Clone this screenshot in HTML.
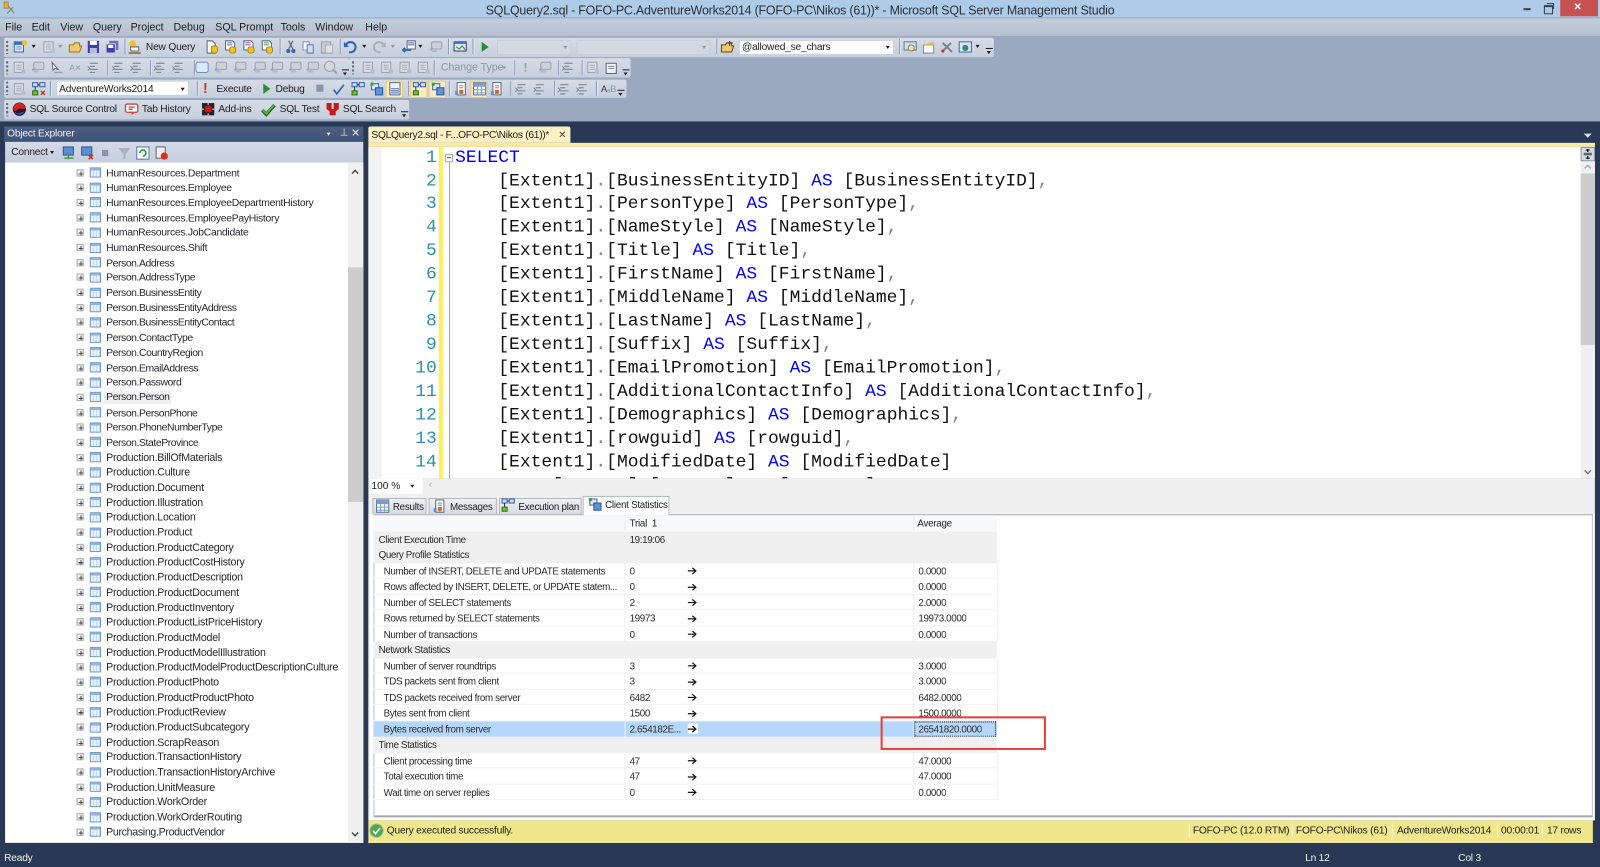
<!DOCTYPE html>
<html><head><meta charset="utf-8"><title>SSMS</title>
<style>
html,body{margin:0;padding:0;background:#293955;overflow:hidden;width:1600px;height:867px}
#root{position:absolute;left:0;top:0;width:1568px;height:850px;transform:scale(1.02041);transform-origin:0 0;overflow:hidden;background:#293955;font-family:"Liberation Sans",sans-serif;font-size:10px;color:#1e1e1e}
.a{position:absolute}
.t{position:absolute;white-space:nowrap;line-height:14px;font-size:10px;letter-spacing:-.2px}
svg.i{position:absolute;width:14px;height:14px;overflow:visible}
.bar{position:absolute;background:linear-gradient(#d6dce7,#c6cfdd);border-radius:2px}
.sep{position:absolute;width:1px;height:15px;background:#8e9bb2;border-right:1px solid #e4e8ef}
.grip{position:absolute;width:2px;height:13px;background:repeating-linear-gradient(#5a6a85 0 2px,transparent 2px 4px)}
.chev{position:absolute;width:7px;height:5px;border-top:1px solid #222}
.chev:after{content:"";position:absolute;left:1px;top:2px;border:2.5px solid transparent;border-top:3px solid #222;border-bottom:0}
.dd{position:absolute;border:2.5px solid transparent;border-top:3px solid #222;border-bottom:0}
.dg{border-top-color:#8a94a6}
.hl{position:absolute;width:17px;height:17px;background:#fdeec4;border:1px solid #e8c878;box-sizing:border-box}
.mn{position:absolute;top:21px;line-height:14px;font-size:10.4px}
#tree{position:absolute;left:5px;top:161.6px;width:336px}
#tree div{position:relative;height:14.7px;line-height:17.7px;padding-left:99px;white-space:nowrap;font-size:10.4px;letter-spacing:-.22px;color:#26282c}
#tree div.h{font-size:10.2px;letter-spacing:-.285px}
#tree div.p{font-size:10.2px;letter-spacing:-.41px}
#tree div:before{content:"";position:absolute;left:69.5px;top:4px;border:1px solid #a8a8a8;background:linear-gradient(90deg,transparent 2px,#444 2px,#444 3px,transparent 3px) 1px 1px/5px 5px no-repeat,linear-gradient(transparent 2px,#444 2px,#444 3px,transparent 3px) 1px 1px/5px 5px no-repeat,#f4f4f4;box-sizing:content-box;width:5px;height:5px}
#tree div:after{content:"";position:absolute;left:83px;top:2.5px;width:9px;height:8px;border:1px solid #6f9bcc;background:linear-gradient(#8eb5e0 0 2px,transparent 2px),repeating-linear-gradient(90deg,#e8f1fa 0 2px,#c8dbef 2px 3px)}
#code{position:absolute;margin:0;font-family:"Liberation Mono",monospace;font-size:17.6px;letter-spacing:.015px;line-height:22.92px;color:#111;white-space:pre}
#nums{position:absolute;width:33px;text-align:right;font-family:"Liberation Mono",monospace;font-size:17.6px;line-height:22.92px;color:#2b91af}
.b{color:#0000ff}.g{color:#808080}
#grid{position:absolute;left:366px;top:520.6px;width:611px}
.r{position:relative;height:15.53px;line-height:17px;border-bottom:1px solid #f2f2f2;box-sizing:border-box;white-space:nowrap;font-size:9.6px;letter-spacing:-.35px;color:#2a2a2a}
.r.h{background:#f0f0f0;border-bottom-color:#f0f0f0}
.r span{position:absolute;top:0;overflow:hidden}
.r .l{left:10px;width:235px}.r.h .l{left:5px}
.r .v{left:251px}.r .w{left:534px}
.r svg{position:absolute;left:308px;top:4.5px;width:9px;height:7px}
.r i{position:absolute;left:245.5px;top:0;width:1px;height:15px;background:#ececec}
.r u{position:absolute;left:528.5px;top:0;width:1px;height:15px;background:#ececec}
.r b{position:absolute;left:610.5px;top:0;width:1px;height:15px;background:#f2f2f2}
.tab{position:absolute;top:488px;height:16px;background:linear-gradient(#eef0f4,#d6dae2);border:1px solid #b4b8c0;border-bottom:0;box-sizing:border-box}
.tt{font-size:9.6px;letter-spacing:-.25px}
</style></head><body>
<svg width="0" height="0" style="position:absolute">
<defs>
<symbol id="doc" viewBox="0 0 14 14"><path d="M3 1h5l3 3v9H3z" fill="#fff" stroke="#5d6a80"/><rect x="7" y="6" width="6" height="7" rx="2" fill="#f4c21e" stroke="#8a6a10" stroke-width=".7"/></symbol>
<symbol id="doc2" viewBox="0 0 14 14"><path d="M3 1h7l2 2v7H3z" fill="#fff" stroke="#5d6a80"/><path d="M4.500 3h5M4.500 5h5" stroke="#4a7ac0"/><rect x="7" y="7" width="6" height="6" rx="2" fill="#f4c21e" stroke="#8a6a10" stroke-width=".7"/></symbol>
<symbol id="doc3" viewBox="0 0 14 14"><path d="M3 1h7l2 2v7H3z" fill="#fff" stroke="#5d6a80"/><path d="M4.500 3h5M4.500 5h5" stroke="#b040b0"/><rect x="7" y="7" width="6" height="6" rx="2" fill="#f4c21e" stroke="#8a6a10" stroke-width=".7"/></symbol>
<symbol id="doc4" viewBox="0 0 14 14"><path d="M3 1h7l2 2v7H3z" fill="#fff" stroke="#5d6a80"/><path d="M4.500 3h5M4.500 5h5" stroke="#40a040"/><rect x="7" y="7" width="6" height="6" rx="2" fill="#f4c21e" stroke="#8a6a10" stroke-width=".7"/></symbol>
<symbol id="gd" viewBox="0 0 14 14"><rect x="2" y="2" width="9" height="10" fill="#d9dde4" stroke="#99a1ae"/><path d="M4 5h5M4 7h5M4 9h5" stroke="#aab1bd"/><path d="M9 9h4v4H9z" fill="#b8bec9"/></symbol>
<symbol id="gl" viewBox="0 0 14 14"><path d="M3 3h8M3 6h5M3 9h8M3 12h5" stroke="#7f8999" stroke-width="1.200"/><path d="M1 6l2 2-2 2" fill="none" stroke="#7f8999"/></symbol>
<symbol id="gb" viewBox="0 0 14 14"><rect x="3" y="2" width="10" height="7" rx="1.500" fill="#ccd1da" stroke="#99a1ae"/><path d="M1 9l3-2v5z" fill="#99a1ae"/><rect x="3" y="9" width="5" height="3" fill="#b5bbc6"/></symbol>
<symbol id="tb" viewBox="0 0 14 14"><path d="M1 2h9v10H1z" fill="#dde6f4" stroke="#3a6ab0"/><path d="M1 2h9v3H1z" fill="#3a70c0"/><path d="M3 7h5M3 9h5" stroke="#7e99c2"/><circle cx="11" cy="3" r="2.500" fill="#f4c21e"/></symbol>
<symbol id="stats" viewBox="0 0 14 14"><rect x="2" y="2" width="7" height="6" fill="#dbe8f8" stroke="#3a6ab0"/><rect x="6" y="6" width="7" height="7" fill="#5d93d8" stroke="#2a5a9a"/><path d="M1 1h3v3H1z" fill="#3aa03a"/></symbol>
<symbol id="plan" viewBox="0 0 14 14"><rect x="1" y="1" width="5" height="4" fill="#cde" stroke="#3060b0"/><rect x="8" y="1" width="5" height="4" fill="#cde" stroke="#3060b0"/><path d="M3.500 5v4M6 3h2" stroke="#333"/><rect x="1" y="9" width="5" height="4" fill="#6cc040" stroke="#307010"/></symbol>
<symbol id="tdoc" viewBox="0 0 14 14"><path d="M3 1h8v12H3z" fill="#fff" stroke="#5d6a80"/><path d="M5 4h4M5 6h4" stroke="#888"/><path d="M5 8h4v4H5z" fill="#d06a30"/><path d="M1 9h3v4H1z" fill="#5d93d8"/></symbol>
<symbol id="grd" viewBox="0 0 14 14"><rect x="1" y="1" width="12" height="12" fill="#fff" stroke="#506e9a"/><path d="M1 4.500h12M1 8h12M1 11h12M5 1v12M9 1v12" stroke="#7f9ac2"/><path d="M1 1h12v3H1z" fill="#7f9ac2"/></symbol>
<symbol id="arr" viewBox="0 0 9 7"><path d="M0 3.500h7" stroke="#111" stroke-width="1.200"/><path d="M4.500 .5l3.500 3-3.500 3" fill="none" stroke="#111" stroke-width="1.200"/></symbol>
</defs>
</svg>
<div id="root">
<!-- title bar -->
<div class="a" style="left:0;top:0;width:1568px;height:17.5px;background:#aecbe8;border-bottom:1px solid #8fabc9;box-sizing:border-box"></div>
<svg class="i" style="left:2px;top:1px"><path d="M2 1h4v6H2z" fill="#f0b020" stroke="#a06a10" stroke-width=".6"/><path d="M6 5l6 7M11 6l-6 6" stroke="#8a8a60" stroke-width="1.200"/></svg>
<div class="t" style="left:476px;top:2.500px;font-size:12.2px;letter-spacing:-.215px;color:#2a2f38">SQLQuery2.sql - FOFO-PC.AdventureWorks2014 (FOFO-PC\Nikos (61))* - Microsoft SQL Server Management Studio</div>
<div class="a" style="left:1493px;top:8px;width:7px;height:2px;background:#33404f"></div>
<div class="a" style="left:1513px;top:5px;width:7px;height:6px;border:1px solid #33404f;border-top-width:2px"></div>
<div class="a" style="left:1516px;top:3px;width:6px;height:5px;border:1px solid #33404f;border-left:0;border-bottom:0"></div>
<div class="a" style="left:1529px;top:0;width:37px;height:15.500px;background:#c75050"></div>
<div class="t" style="left:1542px;top:1px;color:#fff;font-weight:bold;font-size:10px">✕</div>
<!-- menu -->
<div class="a" style="left:0;top:17.500px;width:1568px;height:18.500px;background:linear-gradient(#c5cdda,#b5bfd0)"></div>
<div class="mn" style="left:5px">File</div><div class="mn" style="left:31px">Edit</div><div class="mn" style="left:59px">View</div><div class="mn" style="left:91px">Query</div><div class="mn" style="left:128px">Project</div><div class="mn" style="left:170px">Debug</div><div class="mn" style="left:211px">SQL Prompt</div><div class="mn" style="left:275px">Tools</div><div class="mn" style="left:309px">Window</div><div class="mn" style="left:358px">Help</div>
<!-- toolbar bg -->
<div class="a" style="left:0;top:36px;width:1568px;height:83px;background:#9aa8c0"></div>
<div class="bar" style="left:4px;top:36.500px;width:970px;height:19.500px"></div>
<div class="bar" style="left:4px;top:57px;width:338px;height:19px"></div>
<div class="bar" style="left:342px;top:57px;width:276px;height:19px"></div>
<div class="bar" style="left:4px;top:77.500px;width:610px;height:18.500px"></div>
<div class="bar" style="left:4px;top:97.500px;width:397px;height:19px"></div>
<!-- row 1 -->
<div class="grip" style="left:6px;top:40px"></div>
<svg class="i" style="left:13px;top:39px"><use href="#tb"/></svg><div class="dd" style="left:31px;top:44px"></div>
<svg class="i" style="left:41px;top:39px"><use href="#gd"/></svg><div class="dd dg" style="left:57px;top:44px"></div>
<svg class="i" style="left:67px;top:39px"><path d="M1 5h4l1-2h5v3h2l-2 6H1z" fill="#f2c86a" stroke="#9a7420"/></svg>
<svg class="i" style="left:85px;top:39px"><path d="M1 1h11v12H1z" fill="#3a3fa8"/><rect x="3" y="1" width="7" height="4" fill="#fff"/><rect x="3" y="8" width="7" height="5" fill="#b8bce0"/></svg>
<svg class="i" style="left:103px;top:39px"><path d="M4 1h9v9H4z" fill="#6a6fc0"/><path d="M1 4h9v9H1z" fill="#3a3fa8" stroke="#ccd"/><rect x="3" y="5" width="5" height="3" fill="#fff"/></svg>
<div class="sep" style="left:122px;top:38px"></div>
<svg class="i" style="left:125px;top:39px"><circle cx="5" cy="4" r="3.500" fill="#f4c21e"/><path d="M3 7h8v4H3z" fill="#fff" stroke="#667"/><path d="M1 13h12" stroke="#8a6a20" stroke-width="1.500"/></svg>
<div class="t" style="left:143px;top:39.800px">New Query</div>
<svg class="i" style="left:200px;top:39px"><use href="#doc"/></svg>
<svg class="i" style="left:218px;top:39px"><use href="#doc2"/></svg>
<svg class="i" style="left:236px;top:39px"><use href="#doc3"/></svg>
<svg class="i" style="left:254px;top:39px"><use href="#doc4"/></svg>
<div class="sep" style="left:274px;top:38px"></div>
<svg class="i" style="left:278px;top:39px"><path d="M5 1l4 8M9 1L5 9" stroke="#667" stroke-width="1.200"/><circle cx="4.500" cy="11" r="2" fill="#3a60b0"/><circle cx="9.500" cy="11" r="2" fill="#3a60b0"/></svg>
<svg class="i" style="left:295px;top:39px"><path d="M2 2h6v8H2z" fill="#fff" stroke="#7a90b8"/><path d="M6 5h6v8H6z" fill="#cfe0f6" stroke="#5a7ab0"/></svg>
<svg class="i" style="left:313px;top:39px"><path d="M2 2h9v11H2z" fill="#c8ccd4" stroke="#99a1ae"/><path d="M6 5h7v8H6z" fill="#dde0e6" stroke="#aab"/></svg>
<div class="sep" style="left:333px;top:38px"></div>
<svg class="i" style="left:336px;top:39px"><path d="M3 5a5 5 0 1 1 3 7" fill="none" stroke="#2a60c0" stroke-width="2"/><path d="M1 2v5h5z" fill="#2a60c0"/></svg><div class="dd" style="left:355px;top:44px"></div>
<svg class="i" style="left:365px;top:39px"><path d="M11 5a5 5 0 1 0-3 7" fill="none" stroke="#a8b0bd" stroke-width="2"/><path d="M13 2v5H8z" fill="#a8b0bd"/></svg><div class="dd dg" style="left:383px;top:44px"></div>
<svg class="i" style="left:394px;top:39px"><rect x="5" y="1" width="8" height="8" fill="#fff" stroke="#667"/><path d="M6 3h6M6 5h6" stroke="#3a60b0"/><path d="M1 10h8M3 8l-2 2 2 2" stroke="#2a60c0" stroke-width="1.800" fill="none"/></svg><div class="dd" style="left:410px;top:44px"></div>
<svg class="i" style="left:420px;top:39px"><use href="#gb"/></svg>
<div class="sep" style="left:439px;top:38px"></div>
<svg class="i" style="left:444px;top:39px"><rect x="1" y="2" width="12" height="9" fill="#dde6f4" stroke="#3a4a60"/><path d="M1 2h12v2H1z" fill="#3a70c0"/><path d="M3 7l3 2 3-3 3 4" stroke="#40a040" fill="none" stroke-width="1.200"/></svg>
<div class="sep" style="left:463px;top:38px"></div>
<svg class="i" style="left:468px;top:39px"><path d="M4 2l7 5-7 5z" fill="#2e8b2e"/></svg>
<div class="a" style="left:487px;top:38.500px;width:73px;height:15px;background:#d3d9e3;border:1px solid #c6cdd9;box-sizing:border-box"></div><div class="dd dg" style="left:552px;top:45px"></div>
<div class="a" style="left:565px;top:38.500px;width:131px;height:15px;background:#d3d9e3;border:1px solid #c6cdd9;box-sizing:border-box"></div><div class="dd dg" style="left:688px;top:45px"></div>
<div class="sep" style="left:702px;top:38px"></div>
<svg class="i" style="left:706px;top:39px"><path d="M1 5h4l1-2h5v3h2l-2 6H1z" fill="#f2c86a" stroke="#5a4a20"/><path d="M9 1v5M7 3h5" stroke="#333"/></svg>
<div class="a" style="left:724px;top:38.500px;width:152px;height:15px;background:#fff;border:1px solid #c6cdd9;box-sizing:border-box"></div>
<div class="t" style="left:727px;top:39.500px">@allowed_se_chars</div><div class="dd" style="left:868px;top:45px"></div>
<div class="sep" style="left:881px;top:38px"></div>
<svg class="i" style="left:885px;top:39px"><rect x="1" y="2" width="12" height="8" fill="#cfe0f6" stroke="#5a7ab0"/><circle cx="8" cy="8" r="3" fill="#f4e8b0" stroke="#a08030"/></svg>
<svg class="i" style="left:903px;top:39px"><path d="M2 5h10v8H2z" fill="#fff" stroke="#8a8a8a"/><path d="M2 5l10-3v3z" fill="#e8b840"/></svg>
<svg class="i" style="left:921px;top:39px"><path d="M2 12L11 3M3 3l9 9" stroke="#7a8494" stroke-width="2"/><circle cx="3" cy="11" r="1.500" fill="#c03030"/></svg>
<svg class="i" style="left:939px;top:39px"><rect x="1" y="2" width="12" height="10" fill="#dde6f4" stroke="#3a6ab0"/><circle cx="7" cy="8" r="3" fill="#2e8b6e"/></svg><div class="dd" style="left:956px;top:44px"></div>
<div class="chev" style="left:966px;top:47px"></div>
<!-- row 2 -->
<div class="grip" style="left:6px;top:60px"></div>
<svg class="i" style="left:12px;top:59px"><use href="#gd"/></svg><svg class="i" style="left:30px;top:59px"><use href="#gb"/></svg><svg class="i" style="left:48px;top:59px"><path d="M3 2l1 8 2-2 3 1z" fill="#fff" stroke="#667"/><path d="M5 12h8" stroke="#99a1ae" stroke-width="1.500"/></svg><div class="t" style="left:68px;top:60px;font-size:8px;color:#8e96a4">A✕</div><svg class="i" style="left:85px;top:59px"><use href="#gl"/></svg>
<div class="sep" style="left:105px;top:59px"></div>
<svg class="i" style="left:109px;top:59px"><use href="#gl"/></svg><svg class="i" style="left:127px;top:59px"><use href="#gl"/></svg>
<div class="sep" style="left:147px;top:59px"></div>
<svg class="i" style="left:150px;top:59px"><use href="#gl"/></svg><svg class="i" style="left:168px;top:59px"><use href="#gl"/></svg>
<div class="sep" style="left:190px;top:59px"></div>
<svg class="i" style="left:191px;top:59px"><rect x="1" y="2" width="12" height="10" rx="2" fill="#dbe8f8" stroke="#6f8fc0"/></svg>
<svg class="i" style="left:209px;top:59px"><use href="#gb"/></svg><svg class="i" style="left:228px;top:59px"><use href="#gb"/></svg><svg class="i" style="left:247px;top:59px"><use href="#gb"/></svg><svg class="i" style="left:264px;top:59px"><use href="#gb"/></svg><svg class="i" style="left:282px;top:59px"><use href="#gb"/></svg><svg class="i" style="left:299px;top:59px"><use href="#gb"/></svg><svg class="i" style="left:317px;top:59px"><circle cx="6" cy="6" r="5" fill="#d5d9e0" stroke="#99a1ae"/><path d="M9 9l4 4" stroke="#99a1ae" stroke-width="2"/></svg>
<div class="chev" style="left:335px;top:68px"></div>
<div class="grip" style="left:345px;top:60px"></div>
<svg class="i" style="left:354px;top:59px"><use href="#gd"/></svg><svg class="i" style="left:372px;top:59px"><use href="#gd"/></svg><svg class="i" style="left:390px;top:59px"><use href="#gd"/></svg><svg class="i" style="left:408px;top:59px"><use href="#gd"/></svg>
<div class="sep" style="left:425px;top:59px"></div>
<div class="t" style="left:432px;top:59.500px;font-size:10.400px;letter-spacing:-.02px;color:#8c95a5">Change Type</div><div class="dd dg" style="left:492px;top:65px"></div>
<div class="sep" style="left:504px;top:59px"></div>
<div class="t" style="left:513px;top:59px;font-size:12px;font-weight:bold;color:#9aa2b0">!</div>
<svg class="i" style="left:527px;top:59px"><use href="#gb"/></svg>
<div class="sep" style="left:547px;top:59px"></div>
<svg class="i" style="left:550px;top:59px"><use href="#gl"/></svg>
<div class="sep" style="left:570px;top:59px"></div>
<svg class="i" style="left:574px;top:59px"><use href="#gd"/></svg><svg class="i" style="left:592px;top:59px"><rect x="2" y="3" width="10" height="10" fill="#eef0f4" stroke="#667"/><path d="M4 6h6M4 8h6" stroke="#888"/></svg>
<div class="chev" style="left:610px;top:68px"></div>
<!-- row 3 -->
<div class="grip" style="left:6px;top:80px"></div>
<svg class="i" style="left:12px;top:80px"><use href="#gd"/></svg>
<svg class="i" style="left:31px;top:80px"><use href="#plan"/><path d="M9 9l4 4M13 9l-4 4" stroke="#d03020" stroke-width="1.300"/></svg>
<div class="sep" style="left:49px;top:79px"></div>
<div class="a" style="left:55px;top:79px;width:130px;height:15px;background:#fff;border:1px solid #c6cdd9;box-sizing:border-box"></div>
<div class="t" style="left:58px;top:81px">AdventureWorks2014</div><div class="dd" style="left:177px;top:86px"></div>
<div class="sep" style="left:193px;top:79px"></div>
<div class="t" style="left:199px;top:79px;font-size:14px;font-weight:bold;color:#d83020">!</div>
<div class="t" style="left:212px;top:81px">Execute</div>
<svg class="i" style="left:254px;top:80px"><path d="M4 2l7 5-7 5z" fill="#2e8b2e"/></svg>
<div class="t" style="left:270px;top:81px">Debug</div>
<div class="a" style="left:310px;top:83px;width:7px;height:7px;background:#8a94a6"></div>
<svg class="i" style="left:325px;top:80px"><path d="M2 8l3 4 7-9" fill="none" stroke="#2a60c0" stroke-width="1.600"/></svg>
<svg class="i" style="left:344px;top:80px"><use href="#plan"/></svg>
<svg class="i" style="left:362px;top:80px"><use href="#stats"/></svg>
<div class="hl" style="left:378px;top:78.500px"></div>
<svg class="i" style="left:379.500px;top:80px"><rect x="2" y="1" width="10" height="12" fill="#eef2f8" stroke="#506e9a"/><path d="M3 7h8M3 9h8M3 11h8" stroke="#506e9a"/></svg>
<div class="sep" style="left:400px;top:79px"></div>
<div class="hl" style="left:402px;top:78.500px"></div><div class="hl" style="left:420px;top:78.500px"></div>
<svg class="i" style="left:403.500px;top:80px"><use href="#plan"/></svg><svg class="i" style="left:421.500px;top:80px"><use href="#stats"/></svg>
<div class="sep" style="left:440px;top:79px"></div>
<svg class="i" style="left:445px;top:80px"><use href="#tdoc"/></svg>
<div class="hl" style="left:461px;top:78.500px"></div><svg class="i" style="left:462.500px;top:80px"><use href="#grd"/></svg>
<svg class="i" style="left:480px;top:80px"><use href="#tdoc"/></svg>
<div class="sep" style="left:500px;top:79px"></div>
<svg class="i" style="left:504px;top:80px"><use href="#gl"/></svg><svg class="i" style="left:522px;top:80px"><use href="#gl"/></svg>
<div class="sep" style="left:543px;top:79px"></div>
<svg class="i" style="left:546px;top:80px"><use href="#gl"/></svg><svg class="i" style="left:564px;top:80px"><use href="#gl"/></svg>
<div class="sep" style="left:584px;top:79px"></div>
<div class="t" style="left:589px;top:80px;font-size:9px;color:#334">A<span style="color:#8c95a5">ₐB</span></div>
<div class="chev" style="left:605px;top:88px"></div>
<!-- row 4 -->
<div class="grip" style="left:6px;top:100.500px"></div>
<svg class="i" style="left:12px;top:100px"><circle cx="7" cy="7" r="6.500" fill="#1a1a2a"/><path d="M1 8a6 6 0 0 1 12-2c-3 2-5-1-7 1s-3 2-5 1z" fill="#d82020"/><path d="M2 10c3 3 8 3 10-1-3 1-6 3-10 1z" fill="#2a60d0"/></svg>
<div class="t" style="left:29px;top:100.500px">SQL Source Control</div>
<svg class="i" style="left:122px;top:100px"><rect x="1" y="2" width="12" height="8" rx="1.500" fill="#fff" stroke="#d04040" stroke-width="1.300"/><path d="M4 5h6M4 7h4" stroke="#a02020"/><path d="M7 10v3l3-3z" fill="#d04040"/></svg>
<div class="t" style="left:139px;top:100.500px">Tab History</div>
<svg class="i" style="left:197px;top:100px"><rect x="1" y="1" width="12" height="12" fill="#222"/><rect x="4" y="4" width="6" height="6" fill="#d01818"/><path d="M7 1v2M7 11v2M1 7h2M11 7h2" stroke="#ddd"/></svg>
<div class="t" style="left:214px;top:100.500px">Add-ins</div>
<svg class="i" style="left:256px;top:100px"><path d="M1 8l4 4 8-9" fill="none" stroke="#1e5a1e" stroke-width="3.400"/><path d="M1.500 8l3.500 3.500 7.500-8.500" fill="none" stroke="#4fb83f" stroke-width="1.800"/></svg>
<div class="t" style="left:274px;top:100.500px">SQL Test</div>
<svg class="i" style="left:319px;top:100px"><path d="M1 1h5v6h2V1h5v6l-3 2v4H4V9L1 7z" fill="#c81818"/></svg>
<div class="t" style="left:336px;top:100.500px">SQL Search</div>
<div class="chev" style="left:393px;top:109px"></div>
<!-- Object Explorer -->
<div class="a" style="left:4px;top:124px;width:352px;height:15px;background:linear-gradient(#4d6082,#3d5277)"></div>
<div class="t" style="left:7px;top:125px;color:#f0f2f6">Object Explorer</div>
<div class="dd" style="left:320px;top:130px;border-top-color:#e6eaf0"></div>
<div class="t" style="left:333px;top:124px;color:#e6eaf0;font-size:10px">⊥</div>
<div class="t" style="left:344px;top:124px;color:#e6eaf0;font-size:11px">✕</div>
<div class="a" style="left:5px;top:139px;width:351px;height:20px;background:linear-gradient(#d4dae6,#c6cfdf)"></div>
<div class="t" style="left:11px;top:143px">Connect</div><div class="dd" style="left:49px;top:148px"></div>
<svg class="i" style="left:61px;top:143px"><rect x="1" y="1" width="10" height="8" fill="#5d8ed0" stroke="#2a5a9a"/><path d="M6 9v4M2 12h9" stroke="#3aa03a" stroke-width="1.500"/></svg>
<svg class="i" style="left:79px;top:143px"><rect x="1" y="1" width="10" height="8" fill="#5d8ed0" stroke="#2a5a9a"/><path d="M8 9l4 4M12 9l-4 4" stroke="#d03020" stroke-width="1.500"/></svg>
<div class="a" style="left:100px;top:147px;width:6px;height:6px;background:#8a94a6"></div>
<svg class="i" style="left:115px;top:143px"><path d="M1 2h12L8 8v5H6V8z" fill="#aab2c0"/></svg>
<svg class="i" style="left:133px;top:143px"><rect x="1" y="1" width="12" height="12" fill="#f4f6fa" stroke="#5d7aa8"/><path d="M4 7a3 3 0 1 1 3 3" fill="none" stroke="#3aa03a" stroke-width="1.600"/></svg>
<svg class="i" style="left:151px;top:143px"><rect x="2" y="1" width="9" height="11" fill="#eee" stroke="#667"/><circle cx="10" cy="10" r="3.500" fill="#d83020"/></svg>
<div class="a" style="left:5px;top:159px;width:351px;height:667px;background:#fff;overflow:hidden">
</div>
<div id="tree">
<div class="h">HumanResources.Department</div><div class="h">HumanResources.Employee</div><div class="h">HumanResources.EmployeeDepartmentHistory</div><div class="h">HumanResources.EmployeePayHistory</div><div class="h">HumanResources.JobCandidate</div><div class="h">HumanResources.Shift</div><div class="p">Person.Address</div><div class="p">Person.AddressType</div><div class="p">Person.BusinessEntity</div><div class="p">Person.BusinessEntityAddress</div><div class="p">Person.BusinessEntityContact</div><div class="p">Person.ContactType</div><div class="p">Person.CountryRegion</div><div class="p">Person.EmailAddress</div><div class="p">Person.Password</div><div class="p"><span style="background:#f0f0f0;padding:0 2px 0 2px;margin-left:-2px;display:inline-block;line-height:13px;vertical-align:1px">Person.Person</span></div><div class="p">Person.PersonPhone</div><div class="p">Person.PhoneNumberType</div><div class="p">Person.StateProvince</div><div>Production.BillOfMaterials</div><div>Production.Culture</div><div>Production.Document</div><div>Production.Illustration</div><div>Production.Location</div><div>Production.Product</div><div>Production.ProductCategory</div><div>Production.ProductCostHistory</div><div>Production.ProductDescription</div><div>Production.ProductDocument</div><div>Production.ProductInventory</div><div>Production.ProductListPriceHistory</div><div>Production.ProductModel</div><div>Production.ProductModelIllustration</div><div>Production.ProductModelProductDescriptionCulture</div><div>Production.ProductPhoto</div><div>Production.ProductProductPhoto</div><div>Production.ProductReview</div><div>Production.ProductSubcategory</div><div>Production.ScrapReason</div><div>Production.TransactionHistory</div><div>Production.TransactionHistoryArchive</div><div>Production.UnitMeasure</div><div>Production.WorkOrder</div><div>Production.WorkOrderRouting</div><div style="letter-spacing:-.31px">Purchasing.ProductVendor</div>
</div>
<div class="a" style="left:341px;top:159px;width:15px;height:667px;background:#f0f0f0"></div>
<div class="a" style="left:341px;top:262px;width:15px;height:230px;background:#cdcdcd"></div>
<svg class="i" style="left:341px;top:162px"><path d="M4 8l3-3 3 3" fill="none" stroke="#444" stroke-width="1.400"/></svg>
<svg class="i" style="left:341px;top:810px"><path d="M4 6l3 3 3-3" fill="none" stroke="#444" stroke-width="1.400"/></svg>
<!-- Doc tab -->
<div class="a" style="left:361px;top:124px;width:198px;height:16px;background:#fdf0c4;border-radius:2px 2px 0 0"></div>
<div class="t" style="left:364px;top:126px;letter-spacing:-.28px">SQLQuery2.sql - F...OFO-PC\Nikos (61))*</div>
<div class="t" style="left:547px;top:126px;font-size:10px;color:#444">✕</div>
<div class="dd" style="left:1552px;top:131px;border:4px solid transparent;border-top:4px solid #dfe4ec;border-bottom:0"></div>
<div class="a" style="left:361px;top:140px;width:1202px;height:3.500px;background:#fde8a4"></div>
<!-- Editor -->
<div class="a" style="left:361px;top:143.500px;width:1202px;height:325.500px;background:#fff;overflow:hidden" id="ed"></div>
<div class="a" style="left:362px;top:143.500px;width:12px;height:325.500px;background:#f2f2f2"></div>
<div class="a" style="left:361px;top:143.500px;width:1202px;height:325.500px;overflow:hidden">
<div style="position:absolute;left:68.500px;top:0;width:4px;height:326px;background:#ffee62"></div>
<div style="position:absolute;left:78.500px;top:14px;width:1px;height:312px;background:#a5a5a5"></div>
<div style="position:absolute;left:75px;top:7px;width:6px;height:6px;border:1px solid #a5a5a5;background:linear-gradient(#555,#555) center/4px 1px no-repeat #fff"></div>
<div id="nums" style="left:34px;top:.1px">1<br>2<br>3<br>4<br>5<br>6<br>7<br>8<br>9<br>10<br>11<br>12<br>13<br>14</div>
<pre id="code" style="left:85px;top:.1px"><span class="b">SELECT</span>
    [Extent1]<span class="g">.</span>[BusinessEntityID] <span class="b">AS</span> [BusinessEntityID]<span class="g">,</span>
    [Extent1]<span class="g">.</span>[PersonType] <span class="b">AS</span> [PersonType]<span class="g">,</span>
    [Extent1]<span class="g">.</span>[NameStyle] <span class="b">AS</span> [NameStyle]<span class="g">,</span>
    [Extent1]<span class="g">.</span>[Title] <span class="b">AS</span> [Title]<span class="g">,</span>
    [Extent1]<span class="g">.</span>[FirstName] <span class="b">AS</span> [FirstName]<span class="g">,</span>
    [Extent1]<span class="g">.</span>[MiddleName] <span class="b">AS</span> [MiddleName]<span class="g">,</span>
    [Extent1]<span class="g">.</span>[LastName] <span class="b">AS</span> [LastName]<span class="g">,</span>
    [Extent1]<span class="g">.</span>[Suffix] <span class="b">AS</span> [Suffix]<span class="g">,</span>
    [Extent1]<span class="g">.</span>[EmailPromotion] <span class="b">AS</span> [EmailPromotion]<span class="g">,</span>
    [Extent1]<span class="g">.</span>[AdditionalContactInfo] <span class="b">AS</span> [AdditionalContactInfo]<span class="g">,</span>
    [Extent1]<span class="g">.</span>[Demographics] <span class="b">AS</span> [Demographics]<span class="g">,</span>
    [Extent1]<span class="g">.</span>[rowguid] <span class="b">AS</span> [rowguid]<span class="g">,</span>
    [Extent1]<span class="g">.</span>[ModifiedDate] <span class="b">AS</span> [ModifiedDate]
    <span class="b">FROM</span> [Person]<span class="g">.</span>[Person] <span class="b">AS</span> [Extent1]</pre>
</div>
<!-- editor scrollbar -->
<div class="a" style="left:1549px;top:143.500px;width:14px;height:325.500px;background:#f0f0f0"></div>
<div class="a" style="left:1549px;top:143.500px;width:14px;height:14px;background:#d4dbe6;border:1px solid #8a96ac;box-sizing:border-box"></div>
<svg class="i" style="left:1549px;top:143.500px"><path d="M7 2v3M7 9v3" stroke="#111" stroke-width="1.300"/><path d="M3 7h8" stroke="#666" stroke-width="2.500"/><path d="M5 3h4M5 11h4" stroke="#111"/></svg>
<svg class="i" style="left:1549px;top:157px"><path d="M4 8l3-3 3 3" fill="none" stroke="#a8a8a8" stroke-width="1.400"/></svg>
<div class="a" style="left:1549px;top:170px;width:14px;height:168px;background:#cdcdcd"></div>
<svg class="i" style="left:1549px;top:455px"><path d="M4 6l3 3 3-3" fill="none" stroke="#777" stroke-width="1.400"/></svg>
<!-- results -->
<div class="a" style="left:361px;top:469px;width:1202px;height:35.500px;background:#f0f0f0"></div>
<div class="a" style="left:362px;top:469px;width:52px;height:15px;background:#fff"></div>
<div class="t" style="left:364px;top:470px;letter-spacing:0">100 %</div><div class="dd" style="left:402px;top:475px"></div>
<div class="t" style="left:420px;top:468px;font-size:11px;color:#c0c0c0">‹</div>
<div class="tab" style="left:365px;width:53px"></div><div class="tab" style="left:420px;width:67px"></div><div class="tab" style="left:489px;width:81px"></div>
<div class="a" style="left:571px;top:486px;width:85px;height:19px;background:#fff;border:1px solid #b4b8c0;border-bottom:0;box-sizing:border-box;z-index:2"></div>
<svg class="i" style="left:368px;top:489px"><use href="#grd"/></svg><div class="t tt" style="left:385px;top:490.500px">Results</div>
<svg class="i" style="left:424px;top:489px"><use href="#tdoc"/></svg><div class="t tt" style="left:441px;top:490.500px">Messages</div>
<svg class="i" style="left:491px;top:488px"><use href="#plan"/></svg><div class="t tt" style="left:508px;top:490.500px">Execution plan</div>
<svg class="i" style="left:576px;top:487px;z-index:3"><use href="#stats"/></svg><div class="t tt" style="left:593px;top:489px;z-index:3">Client Statistics</div>
<div class="a" style="left:361px;top:504px;width:1202px;height:300px;background:#fff;border-left:1px solid #e0e0e0;box-sizing:border-box"></div>
<div class="a" style="left:365.500px;top:504px;width:1195px;height:297px;border:1px solid #c0c0c0;border-bottom:2px solid #a8a8a8;border-top-color:#a8a8a8;box-sizing:border-box"></div>
<div class="a" style="left:366px;top:505px;width:611px;height:15.500px;background:#f8f9fb"></div>
<div class="t tt" style="left:617px;top:507px">Trial&nbsp; 1</div><div class="t tt" style="left:899px;top:507px">Average</div>
<div class="a" style="left:611.500px;top:505px;width:1px;height:15px;background:#e9edf2"></div><div class="a" style="left:894.500px;top:505px;width:1px;height:15px;background:#e9edf2"></div>
<div id="grid">
<div class="r h"><span class="l">Client Execution Time</span><span class="v">19:19:06</span></div>
<div class="r h"><span class="l">Query Profile Statistics</span></div>
<div class="r"><i></i><u></u><b></b><span class="l">Number of INSERT, DELETE and UPDATE statements</span><span class="v">0</span><svg><use href="#arr"/></svg><span class="w">0.0000</span></div>
<div class="r"><i></i><u></u><b></b><span class="l">Rows affected by INSERT, DELETE, or UPDATE statem...</span><span class="v">0</span><svg><use href="#arr"/></svg><span class="w">0.0000</span></div>
<div class="r"><i></i><u></u><b></b><span class="l">Number of SELECT statements</span><span class="v">2</span><svg><use href="#arr"/></svg><span class="w">2.0000</span></div>
<div class="r"><i></i><u></u><b></b><span class="l">Rows returned by SELECT statements</span><span class="v">19973</span><svg><use href="#arr"/></svg><span class="w">19973.0000</span></div>
<div class="r"><i></i><u></u><b></b><span class="l">Number of transactions</span><span class="v">0</span><svg><use href="#arr"/></svg><span class="w">0.0000</span></div>
<div class="r h"><span class="l">Network Statistics</span></div>
<div class="r"><i></i><u></u><b></b><span class="l">Number of server roundtrips</span><span class="v">3</span><svg><use href="#arr"/></svg><span class="w">3.0000</span></div>
<div class="r"><i></i><u></u><b></b><span class="l">TDS packets sent from client</span><span class="v">3</span><svg><use href="#arr"/></svg><span class="w">3.0000</span></div>
<div class="r"><i></i><u></u><b></b><span class="l">TDS packets received from server</span><span class="v">6482</span><svg><use href="#arr"/></svg><span class="w">6482.0000</span></div>
<div class="r"><i></i><u></u><b></b><span class="l">Bytes sent from client</span><span class="v">1500</span><svg><use href="#arr"/></svg><span class="w">1500.0000</span></div>
<div class="r" style="background:#b5d7fb;border-bottom-color:#b5d7fb"><i style="background:#e9f2fd"></i><u></u><span class="l">Bytes received from server</span><span class="v">2.654182E...</span><div class="a" style="left:308px;top:2.500px;width:10px;height:10px;background:#fff"></div><svg><use href="#arr"/></svg><div class="a" style="left:530px;top:0;width:80px;height:15px;border:1px dotted #222;box-sizing:border-box;background:#b5d7fb"></div><span class="w" style="left:534px">26541820.0000</span></div>
<div class="r h"><span class="l">Time Statistics</span></div>
<div class="r"><i></i><u></u><b></b><span class="l">Client processing time</span><span class="v">47</span><svg><use href="#arr"/></svg><span class="w">47.0000</span></div>
<div class="r"><i></i><u></u><b></b><span class="l">Total execution time</span><span class="v">47</span><svg><use href="#arr"/></svg><span class="w">47.0000</span></div>
<div class="r"><i></i><u></u><b></b><span class="l">Wait time on server replies</span><span class="v">0</span><svg><use href="#arr"/></svg><span class="w">0.0000</span></div>
</div>
<div class="a" style="left:863px;top:702px;width:162px;height:33px;border:2px solid #e8403a;box-sizing:border-box;z-index:5"></div>
<!-- status yellow -->
<div class="a" style="left:361px;top:804px;width:1200px;height:21.500px;background:#f0e68c;border-bottom:1px solid #f6eeb0;box-sizing:border-box"></div>
<svg class="i" style="left:362px;top:807px"><circle cx="7" cy="7" r="6.500" fill="#4aa84a" stroke="#a8b8a0"/><path d="M3.500 7l2.500 3 4.500-5.500" fill="none" stroke="#fff" stroke-width="1.600"/></svg>
<div class="t" style="left:379px;top:808px">Query executed successfully.</div>
<div class="a" style="left:1165px;top:807px;width:1px;height:14px;background:#faf6d0"></div><div class="t" style="left:1169px;top:808px">FOFO-PC (12.0 RTM)</div>
<div class="a" style="left:1266px;top:807px;width:1px;height:14px;background:#faf6d0"></div><div class="t" style="left:1270px;top:808px">FOFO-PC\Nikos (61)</div>
<div class="a" style="left:1364px;top:807px;width:1px;height:14px;background:#faf6d0"></div><div class="t" style="left:1369px;top:808px">AdventureWorks2014</div>
<div class="a" style="left:1467px;top:807px;width:1px;height:14px;background:#faf6d0"></div><div class="t" style="left:1471px;top:808px">00:00:01</div>
<div class="a" style="left:1511px;top:807px;width:1px;height:14px;background:#faf6d0"></div><div class="t" style="left:1516px;top:808px">17 rows</div>
<!-- bottom -->
<div class="t" style="left:4px;top:835px;color:#f0f2f6">Ready</div>
<div class="t" style="left:1279px;top:835px;color:#f0f2f6">Ln 12</div>
<div class="t" style="left:1429px;top:835px;color:#f0f2f6">Col 3</div>
</div>
</body></html>
